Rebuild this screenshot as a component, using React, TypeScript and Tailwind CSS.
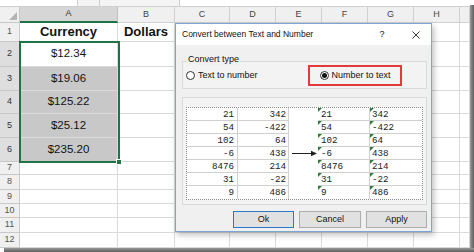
import React from "react";

const cols = [
  "w-[20px]",
  "w-[98px]",
  "w-[57px]",
  "w-[55px]",
  "w-[46px]",
  "w-[46px]",
  "w-[46px]",
  "w-[46px]",
  "w-[46px]",
  "w-[10px]",
];
const letters = ["", "A", "B", "C", "D", "E", "F", "G", "H", ""];

const rowHeights = [
  "h-[19px]",
  "h-[25px]",
  "h-[24px]",
  "h-[23px]",
  "h-[24px]",
  "h-[24px]",
  "h-[13px]",
  "h-[15px]",
  "h-[14px]",
  "h-[14px]",
  "h-[15px]",
  "h-[15px]",
];

const currency = ["$12.34", "$19.06", "$125.22", "$25.12", "$235.20"];

const left1 = ["21", "54", "102", "-6", "8476", "31", "9"];
const left2 = ["342", "-422", "64", "438", "214", "-22", "486"];

function Tri() {
  return (
    <span className="absolute top-0 left-0 w-0 h-0 border-t-[4px] border-r-[4px] border-t-[#2f7d3a] border-r-transparent" />
  );
}

function Radio({ checked }: { checked?: boolean }) {
  return (
    <span className="w-[9px] h-[9px] rounded-full border border-[#333] bg-white flex items-center justify-center">
      {checked && <span className="w-[5px] h-[5px] rounded-full bg-[#111]" />}
    </span>
  );
}

function Dialog() {
  return (
    <div className="absolute left-[175px] top-[23px] w-[257px] h-[209px] flex flex-col border border-[#7ba6d4] bg-[#f0f0f0] shadow-[2px_3px_6px_rgba(0,0,0,0.25)] text-[9px] text-[#111]">
      <div className="h-[21px] bg-white flex items-center pl-[6px] text-[8.5px]">
        <span className="flex-1">Convert between Text and Number</span>
        <span className="w-[10px] text-center text-[9px]">?</span>
        <span className="ml-[24px] mr-[10px] w-[10px] flex justify-center">
          <svg width="8" height="8" viewBox="0 0 8 8">
            <path d="M0.5 0.5 L7.5 7.5 M7.5 0.5 L0.5 7.5" stroke="#222" strokeWidth="0.9" />
          </svg>
        </span>
      </div>

      <div className="flex-1 flex flex-col pl-[6px] pr-[4px]">
        <div className="relative mt-[16px] h-[28px] border border-[#d9d9d9] bg-[#f3f3f3] flex items-center pl-[3px]">
          <span className="absolute -top-[9px] left-[4px] px-[1px] bg-[#f0f0f0] leading-[12px]">
            Convert type
          </span>
          <Radio />
          <span className="ml-[3px] leading-[12px]">Text to number</span>
          <div className="ml-[50px] w-[94px] h-[21px] border-2 border-[#e23a3a] flex items-center pl-[10px]">
            <Radio checked />
            <span className="ml-[3px] leading-[12px]">Number to text</span>
          </div>
        </div>

        <div className="mt-[8px] border border-[#d9d9d9] bg-[#f4f4f4] pt-[9px] pb-[4px] px-[3px]">
          <div className="h-[93px] border border-dotted border-[#8a8a8a] bg-white flex font-['Liberation_Mono',monospace] text-[9.2px] text-[#222]">
            <div className="w-[51px] border-r border-[#d0d0d0]">
              {left1.map((v, i) => (
                <div key={i} className={`h-[13px] leading-[13px] text-right pr-[3px] ${i < 6 ? "border-b border-[#d0d0d0]" : ""}`}>
                  {v}
                </div>
              ))}
            </div>
            <div className="w-[51px] border-r border-[#d0d0d0]">
              {left2.map((v, i) => (
                <div key={i} className={`h-[13px] leading-[13px] text-right pr-[2px] ${i < 6 ? "border-b border-[#d0d0d0]" : ""}`}>
                  {v}
                </div>
              ))}
            </div>
            <div className="w-[29px] flex flex-col">
              <div className="h-[39px]" />
              <div className="h-[13px] flex items-center pl-[3px]">
                <svg width="25" height="7" viewBox="0 0 25 7">
                  <path d="M0 3.5 H20" stroke="#222" strokeWidth="1" />
                  <path d="M19 0.8 L25 3.5 L19 6.2 Z" fill="#222" />
                </svg>
              </div>
            </div>
            <div className="w-[52px] border-r border-[#d0d0d0]">
              {left1.map((v, i) => (
                <div key={i} className={`relative h-[13px] leading-[13px] pl-[3px] ${i < 6 ? "border-b border-[#d0d0d0]" : ""}`}>
                  <Tri />
                  {v}
                </div>
              ))}
            </div>
            <div className="flex-1">
              {left2.map((v, i) => (
                <div key={i} className={`relative h-[13px] leading-[13px] pl-[2px] ${i < 6 ? "border-b border-[#d0d0d0]" : ""}`}>
                  <Tri />
                  {v}
                </div>
              ))}
            </div>
          </div>
        </div>

        <div className="mt-[6px] flex justify-end gap-[5px]">
          <button className="w-[61px] h-[17px] bg-[#e1e1e1] border border-[#2e78c8] leading-[15px]">Ok</button>
          <button className="w-[62px] h-[17px] bg-[#e1e1e1] border border-[#adadad] leading-[15px]">Cancel</button>
          <button className="w-[61px] h-[17px] bg-[#e1e1e1] border border-[#adadad] leading-[15px]">Apply</button>
        </div>
      </div>
    </div>
  );
}

export default function App() {
  return (
    <div className="w-[474px] h-[252px] bg-white overflow-hidden font-['Liberation_Sans',Arial,sans-serif]">
      <div className="flex">
        <div className="relative w-[470px] h-[248px]">
          <div className="h-[7px] flex bg-[#f4f4f4] border-b border-[#cfcfcf]">
            <div className="w-[78px] bg-white border-r border-[#cfcfcf]" />
            <div className="w-[22px] border-r border-[#cfcfcf]" />
            <div className="w-[80px] border-r border-[#cfcfcf]" />
            <div className="flex-1 bg-white" />
          </div>

          <div className="flex h-[16px]">
            {cols.map((c, i) =>
              i === 0 ? (
                <div key={i} className={`${c} bg-[#f0f0f0] border-r border-b border-[#c8c8c8] flex items-end justify-end p-[2px]`}>
                  <span className="w-0 h-0 border-b-[8px] border-l-[8px] border-b-[#b4b4b4] border-l-transparent" />
                </div>
              ) : (
                <div
                  key={i}
                  className={`${c} flex items-center justify-center text-[9px] border-r ${
                    i === 1
                      ? "bg-[#d6d6d6] border-[#c0c0c0] border-b-2 border-b-[#217346] text-[#333]"
                      : "bg-[#f0f0f0] border-[#d0d0d0] border-b text-[#444]"
                  }`}
                >
                  {letters[i]}
                </div>
              )
            )}
          </div>

          {rowHeights.map((h, r) => {
            const row = r + 1;
            const sel = row >= 2 && row <= 6;
            return (
              <div key={r} className={`flex ${h}`}>
                {cols.map((c, i) => {
                  if (i === 0)
                    return (
                      <div
                        key={i}
                        className={`${c} flex items-center justify-center text-[9px] border-r border-b border-[#c8c8c8] ${
                          sel ? "bg-[#dedede] text-[#333]" : "bg-[#f0f0f0] text-[#555]"
                        }`}
                      >
                        {row}
                      </div>
                    );
                  let content: React.ReactNode = null;
                  let extra = "";
                  if (row === 1 && i === 1) content = <span className="font-bold text-[13px]">Currency</span>;
                  if (row === 1 && i === 2) content = <span className="font-bold text-[13px]">Dollars</span>;
                  if (sel && i === 1) {
                    content = <span className="text-[11.5px]">{currency[row - 2]}</span>;
                    if (row > 2) extra = "bg-[#c8c8c8]";
                  }
                  return (
                    <div key={i} className={`${c} ${extra} flex items-center justify-center text-[#111] border-r border-b border-[#dadada]`}>
                      {content}
                    </div>
                  );
                })}
              </div>
            );
          })}

          <div className="absolute left-[19px] top-[41px] w-[101px] h-[122px] border-2 border-[#217346]" />
          <div className="absolute left-[116px] top-[159px] w-[6px] h-[6px] bg-[#217346] border border-white" />

          <Dialog />
        </div>
        <div className="w-[4px] h-[243px] mt-[5px] bg-linear-to-r from-[#9a9a9a] to-[#5e5e5e]" />
      </div>
      <div className="ml-[4px] h-[4px] bg-linear-to-b from-[#9a9a9a] to-[#5e5e5e]" />
    </div>
  );
}
